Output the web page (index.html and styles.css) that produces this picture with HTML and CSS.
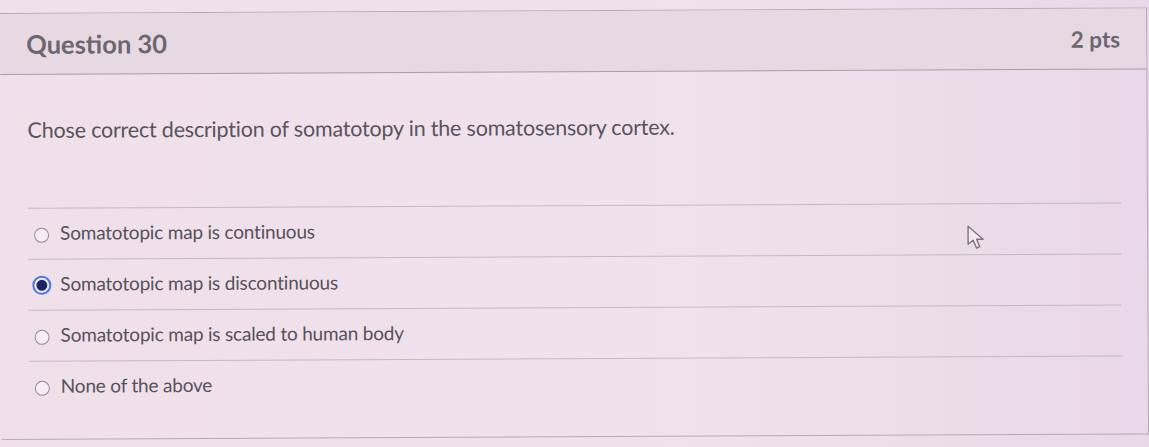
FILE: index.html
```html
<!DOCTYPE html>
<html lang="en">

<head>
    <meta charset="UTF-8">
    <meta name="viewport" content="width=device-width, initial-scale=1.0">
    <title>Question 30</title>
    <link rel="stylesheet" href="styles.css">
</head>

<body>
    <div class="page">
        <div class="question">
            <div class="question-header">
                <h2 class="question-title">Question 30</h2>
                <span class="question-points">2 pts</span>
            </div>
            <div class="question-text">Chose correct description of somatotopy in the somatosensory cortex.</div>
            <ul class="answers">
                <li class="answer"><span class="radio"></span>Somatotopic map is continuous</li>
                <li class="answer"><span class="radio checked"></span>Somatotopic map is discontinuous</li>
                <li class="answer"><span class="radio"></span>Somatotopic map is scaled to human body</li>
                <li class="answer"><span class="radio"></span>None of the above</li>
            </ul>
            <!-- mouse pointer resting over the first answer -->
            <svg class="pointer" width="22" height="28" viewBox="0 0 22 28">
                <path d="M2 2 L2 20 L7 16 L10.5 24 L13.5 22.5 L10.5 15 L17 15 Z" fill="#f3e9f0" stroke="#7d7680" stroke-width="1.4" stroke-linejoin="round" />
            </svg>
        </div>
    </div>
</body>

</html>
```

FILE: styles.css
```css
body {
    font-family: Lato, "Open Sans", sans-serif;
    background: linear-gradient(90deg, #efe0ea 0%, #f0e2ec 60%, #e8d8e9 100%);
    color: #5d5862;
    margin: 0;
    height: 100vh;
    overflow: hidden;
}

.page {
    padding-top: 13px;
}

.question {
    position: relative;
    border: 1px solid #b5aab3;
    border-left: none;
    margin-right: 2px;
    transform: rotate(-0.28deg);
    transform-origin: left top;
}

.question-header {
    height: 60px;
    display: flex;
    justify-content: space-between;
    align-items: center;
    padding: 0 26px 0 26px;
    background: #e7d9e2;
    border-bottom: 1px solid #a89ea7;
}

.question-title {
    margin: 0;
    font-size: 25.5px;
    font-weight: bold;
    color: #6b6770;
}

.question-points {
    font-size: 22.5px;
    font-weight: bold;
    color: #6b6770;
}

.question-text {
    margin: 42px 27px 0 27px;
    font-size: 21.5px;
    line-height: 26px;
    color: #59545e;
    letter-spacing: -0.2px;
}

.answers {
    list-style-type: none;
    margin: 65px 26px 0 27px;
    padding: 0 0 27px 0;
}

.answer {
    height: 47px;
    padding-bottom: 3px;
    border-top: 1px solid #c4b9c2;
    display: flex;
    align-items: center;
    font-size: 19px;
    color: #57525d;
    letter-spacing: -0.2px;
}

.radio {
    width: 13px;
    height: 13px;
    border: 1.6px solid #8d8892;
    border-radius: 50%;
    margin: 6px 11px 0 6px;
    background: #f6eef4;
    flex-shrink: 0;
}

.radio.checked {
    background: #1c2566;
    border: 2.5px solid #f4ecf3;
    width: 11px;
    height: 11px;
    box-shadow: 0 0 0 2px #4a76e0;
    margin-top: 4px;
}

.pointer {
    position: absolute;
    left: 965px;
    top: 215px;
}
```
